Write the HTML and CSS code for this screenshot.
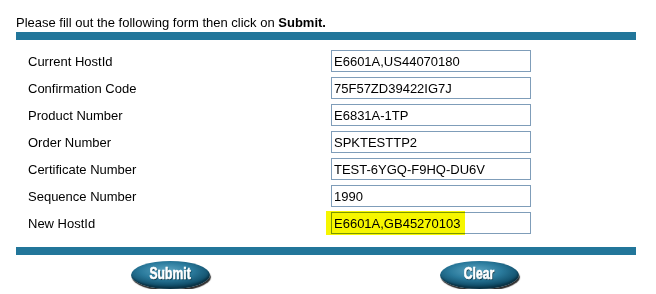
FILE: index.html
```html
<!DOCTYPE html>
<html>
<head>
<meta charset="utf-8">
<link rel="stylesheet" href="styles.css">
</head>
<body>
<div class="page">
  <p class="intro">Please fill out the following form then click on <b>Submit.</b></p>
  <div class="bar"></div>
  <form class="form">
    <label class="lbl">Current HostId</label>
    <input class="field" type="text" value="E6601A,US44070180">
    <label class="lbl">Confirmation Code</label>
    <input class="field" type="text" value="75F57ZD39422IG7J">
    <label class="lbl">Product Number</label>
    <input class="field" type="text" value="E6831A-1TP">
    <label class="lbl">Order Number</label>
    <input class="field" type="text" value="SPKTESTTP2">
    <label class="lbl">Certificate Number</label>
    <input class="field" type="text" value="TEST-6YGQ-F9HQ-DU6V">
    <label class="lbl">Sequence Number</label>
    <input class="field" type="text" value="1990">
    <label class="lbl">New HostId</label>
    <span class="hl-wrap">
      <input class="field" type="text" value="E6601A,GB45270103">
      <span class="marker"></span>
    </span>
  </form>
  <div class="bar"></div>
  <div class="buttons">
    <span class="btn"><span class="btn-text">Submit</span></span>
    <span class="btn"><span class="btn-text">Clear</span></span>
  </div>
</div>
</body>
</html>
```
FILE: styles.css
```css
html, body {
  margin: 0;
  padding: 0;
  background: #ffffff;
}
.page {
  padding: 0 20px 0 16px;
  font-family: "Liberation Sans", Arial, sans-serif;
  font-size: 13px;
  color: #000;
}
.intro {
  margin: 0;
  padding-top: 15px;
  height: 17px;
  line-height: 15px;
  font-size: 13px;
}
.intro b {
  font-weight: bold;
}
.bar {
  height: 8px;
  background: #22769a;
}
.form {
  display: grid;
  grid-template-columns: 303px 200px;
  grid-auto-rows: 22px;
  row-gap: 5px;
  padding: 10px 0 13px 12px;
  align-items: center;
}
.lbl {
  font-size: 13px;
  line-height: 22px;
  padding-top: 1px;
}
.field {
  box-sizing: border-box;
  width: 200px;
  height: 22px;
  margin: 0;
  padding: 1px 2px 0;
  border: 1px solid #7f9db9;
  background: #fff;
  font-family: "Liberation Sans", Arial, sans-serif;
  font-size: 13px;
  color: #000;
  outline: none;
}
.hl-wrap {
  position: relative;
  display: block;
  width: 200px;
  height: 22px;
}
.marker {
  position: absolute;
  left: -5px;
  top: -1px;
  width: 139px;
  height: 24px;
  background: #f6f600;
  mix-blend-mode: multiply;
  pointer-events: none;
}
.buttons {
  display: flex;
  padding: 6px 0 0 115px;
  gap: 230px;
}
.btn {
  box-sizing: border-box;
  display: flex;
  align-items: center;
  justify-content: center;
  width: 79px;
  height: 28px;
  border-radius: 50%;
  background: radial-gradient(ellipse 60% 55% at 45% 35%, #5fa6c2 0%, #2a7a9c 55%, #0f4b66 100%);
  box-shadow: 1px 2px 1px #2e2e2e, inset -1px -2px 2px rgba(0,0,0,0.35);
}
.btn-text {
  display: inline-block;
  margin-top: -2px;
  font-family: "Liberation Sans", Arial, sans-serif;
  font-weight: bold;
  font-size: 16px;
  line-height: 16px;
  color: #fff;
  -webkit-text-stroke: 0.6px #fff;
  text-shadow: 1px 1px 1px #08303f;
  transform: scaleX(0.76);
}
```
